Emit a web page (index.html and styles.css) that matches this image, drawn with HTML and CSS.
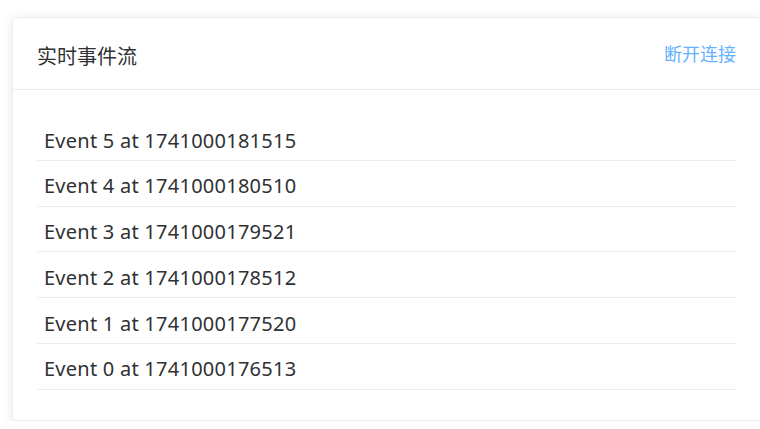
FILE: index.html
```html
<!DOCTYPE html>
<html lang="zh">
<head>
<meta charset="utf-8">
<link rel="stylesheet" href="styles.css">
</head>
<body>
<div class="page">
  <div class="card">
    <div class="card-header">
      <span class="title">实时事件流</span>
      <button class="link-btn">断开连接</button>
    </div>
    <div class="card-body">
      <ul class="events">
        <li>Event 5 at 1741000181515</li>
        <li>Event 4 at 1741000180510</li>
        <li>Event 3 at 1741000179521</li>
        <li>Event 2 at 1741000178512</li>
        <li>Event 1 at 1741000177520</li>
        <li>Event 0 at 1741000176513</li>
      </ul>
    </div>
  </div>
</div>
</body>
</html>
```
FILE: styles.css
```css
html, body {
  margin: 0;
  padding: 0;
  background: #fff;
  overflow: hidden;
}
body {
  font-family: "Noto Sans", "Noto Sans CJK SC", sans-serif;
  color: #303133;
}
.page {
  padding: 17px 0 0 12px;
  width: 760px;
  box-sizing: border-box;
}
.card {
  width: 749px;
  box-sizing: border-box;
  border: 1px solid #ebeef5;
  border-radius: 4px;
  background: #fff;
  box-shadow: 0 2px 12px 0 rgba(0, 0, 0, 0.1);
}
.card-header {
  height: 71px;
  padding: 0 24px;
  border-bottom: 1px solid #ebeef5;
  display: flex;
  align-items: center;
  justify-content: space-between;
}
.title {
  margin-top: 4px;
  font-size: 20px;
  font-family: "Noto Sans CJK SC", sans-serif;
  color: #303133;
}
.link-btn {
  border: 0;
  background: none;
  padding: 0;
  margin-top: -2px;
  font-family: "Noto Sans CJK SC", sans-serif;
  font-size: 18px;
  color: #66b1ff;
  cursor: pointer;
}
.card-body {
  padding: 25px 24px 30px;
}
.events {
  list-style: none;
  margin: 0;
  padding: 0;
}
.events li {
  padding: 15.5px 7px 8.5px;
  line-height: 20.8px;
  font-size: 20px;
  letter-spacing: 0.25px;
  border-bottom: 1px solid #ebeef5;
  color: #303133;
}
```
